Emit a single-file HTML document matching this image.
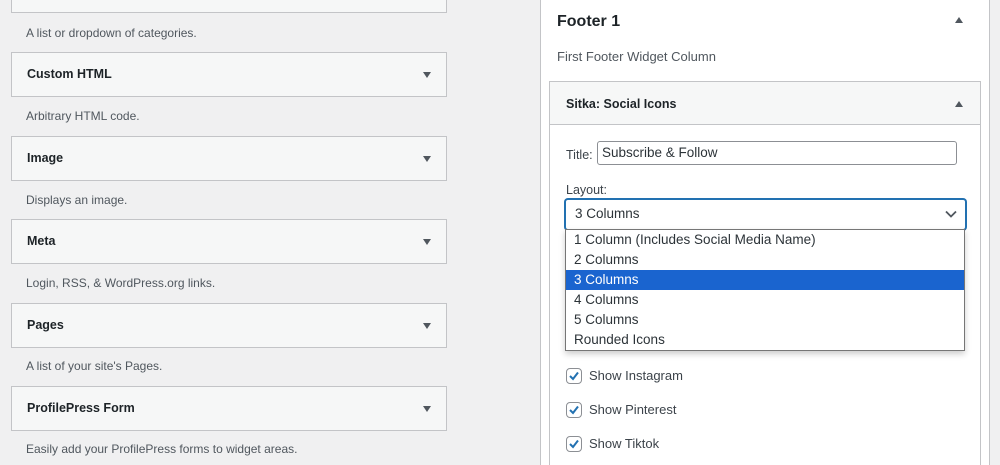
<!DOCTYPE html>
<html style="overflow:hidden;height:465px"><head><meta charset="utf-8"><style>
*{box-sizing:border-box;margin:0;padding:0}
body{width:1000px;height:465px;overflow:hidden;background:#f0f0f1;font-family:"Liberation Sans",sans-serif;font-size:13px;color:#3c434a;position:relative}
.a{position:absolute}
.wb{position:absolute;left:11px;width:436px;height:45px;background:#f6f7f7;border:1px solid #c3c4c7}
.wb span{position:absolute;left:15px;top:14px;font-weight:bold;color:#1d2327;font-size:12.5px}
.tri{position:absolute;width:0;height:0;border-left:4px solid transparent;border-right:4px solid transparent;border-top:6px solid #50575e}
.wb .tri{right:15px;top:19px}
.up{border-top:none;border-bottom:6px solid #50575e}
.d{position:absolute;left:26px;font-size:12px;color:#50575e}
.opt{position:absolute;left:0;width:398px;height:20px;padding-left:8px;line-height:20px;font-size:13.5px;color:#2c3338}
.cb{position:absolute;left:566px;width:16px;height:16px;border:1px solid #8c8f94;border-radius:4px;background:#fff}
.cb svg{position:absolute;left:1px;top:1px}
.cl{position:absolute;left:589px;font-size:13px;color:#3c434a}
</style></head><body>
<div class="wb" style="top:-32px"></div>
<div class="d" style="top:26px">A list or dropdown of categories.</div>
<div class="wb" style="top:52px"><span>Custom HTML</span><i class="tri"></i></div>
<div class="d" style="top:109px">Arbitrary HTML code.</div>
<div class="wb" style="top:136px"><span>Image</span><i class="tri"></i></div>
<div class="d" style="top:193px">Displays an image.</div>
<div class="wb" style="top:219px"><span>Meta</span><i class="tri"></i></div>
<div class="d" style="top:276px">Login, RSS, &amp; WordPress.org links.</div>
<div class="wb" style="top:303px"><span>Pages</span><i class="tri"></i></div>
<div class="d" style="top:359px">A list of your site's Pages.</div>
<div class="wb" style="top:386px"><span>ProfilePress Form</span><i class="tri"></i></div>
<div class="d" style="top:442px">Easily add your ProfilePress forms to widget areas.</div>

<div class="a" style="left:540px;top:-5px;width:450px;height:475px;background:#fff;border:1px solid #c3c4c7"></div>
<div class="a" style="left:557px;top:13px;font-size:16px;font-weight:bold;color:#1d2327">Footer 1</div>
<i class="tri up" style="left:955px;top:17px"></i>
<div class="a" style="left:557px;top:49px;font-size:13px;color:#50575e">First Footer Widget Column</div>
<div class="a" style="left:549px;top:81px;width:432px;height:390px;background:#fff;border:1px solid #c3c4c7"></div>
<div class="a" style="left:550px;top:82px;width:430px;height:43px;background:#f6f7f7;border-bottom:1px solid #c3c4c7"></div>
<div class="a" style="left:566px;top:97px;font-weight:bold;color:#1d2327;font-size:12.5px">Sitka: Social Icons</div>
<i class="tri up" style="left:955px;top:101px"></i>
<div class="a" style="left:566px;top:148px;font-size:12.5px">Title:</div>
<div class="a" style="left:597px;top:141px;width:360px;height:24px;border:1px solid #8c8f94;border-radius:3px;padding:3px 4px;font-size:13.5px;color:#2c3338">Subscribe &amp; Follow</div>
<div class="a" style="left:566px;top:183px;font-size:12.5px">Layout:</div>
<div class="a" style="left:565px;top:199px;width:401px;height:31px;border:1px solid #2271b1;box-shadow:0 0 0 1px #2271b1;border-radius:3px;background:#fff"></div>
<div class="a" style="left:575px;top:206px;font-size:13.5px;color:#2c3338">3 Columns</div>
<svg class="a" style="left:945px;top:209px" width="12" height="10" viewBox="0 0 12 10"><path d="M1 2.5 L6 7.5 L11 2.5" stroke="#50575e" stroke-width="1.8" fill="none"/></svg>
<div class="a" style="left:565px;top:229px;width:400px;height:122px;background:#fff;border:1px solid #767676;box-shadow:0 3px 6px rgba(0,0,0,.2)">
<div class="opt" style="top:0">1 Column (Includes Social Media Name)</div>
<div class="opt" style="top:20px">2 Columns</div>
<div class="opt" style="top:40px;background:#1a64cf;color:#fff">3 Columns</div>
<div class="opt" style="top:60px">4 Columns</div>
<div class="opt" style="top:80px">5 Columns</div>
<div class="opt" style="top:100px">Rounded Icons</div>
</div>
<div class="cb" style="top:368px"><svg width="12" height="12" viewBox="0 0 12 12"><path d="M2 6 L5 9 L10 2.5" stroke="#2271b1" stroke-width="2" fill="none"/></svg></div>
<div class="cl" style="top:368px">Show Instagram</div>
<div class="cb" style="top:402px"><svg width="12" height="12" viewBox="0 0 12 12"><path d="M2 6 L5 9 L10 2.5" stroke="#2271b1" stroke-width="2" fill="none"/></svg></div>
<div class="cl" style="top:402px">Show Pinterest</div>
<div class="cb" style="top:436px"><svg width="12" height="12" viewBox="0 0 12 12"><path d="M2 6 L5 9 L10 2.5" stroke="#2271b1" stroke-width="2" fill="none"/></svg></div>
<div class="cl" style="top:436px">Show Tiktok</div>
</body></html>
